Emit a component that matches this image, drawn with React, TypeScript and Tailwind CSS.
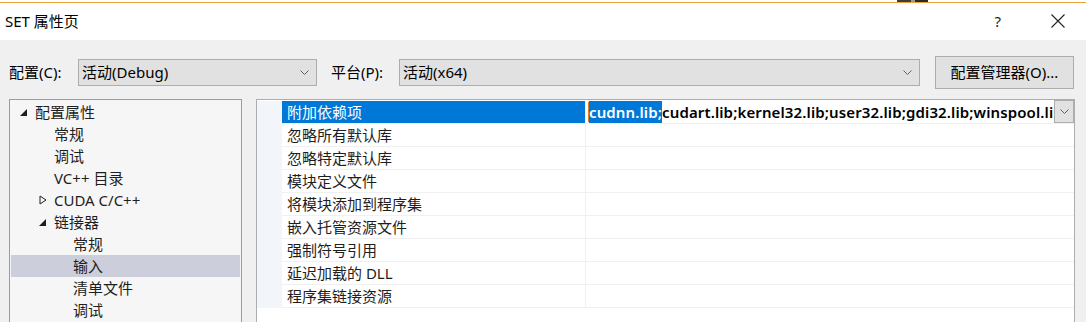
import React from "react";

const font = "font-['Noto_Sans','Noto_Sans_CJK_SC',sans-serif]";

function Chevron() {
  return (
    <svg width="9" height="5" viewBox="0 0 9 5" className="shrink-0">
      <polyline points="0.5,0.5 4.5,4.5 8.5,0.5" fill="none" stroke="#606060" strokeWidth="1" />
    </svg>
  );
}

function Combo({ text, width }: { text: string; width: string }) {
  return (
    <div className={`${width} h-[27px] flex items-center justify-between bg-[#e1e1e1] border border-[#adadad] pl-[3px] pr-[7px]`}>
      <span className="text-[15px] leading-none text-black">{text}</span>
      <Chevron />
    </div>
  );
}

function Expanded() {
  return (
    <svg width="9" height="9" viewBox="0 0 9 9" className="shrink-0">
      <polygon points="8,1 8,8 1,8" fill="#1e1e1e" />
    </svg>
  );
}

function Collapsed() {
  return (
    <svg width="8" height="10" viewBox="0 0 8 10" className="shrink-0">
      <polygon points="1,1 7,5 1,9" fill="none" stroke="#1e1e1e" strokeWidth="1" />
    </svg>
  );
}

const tree: { label: string; level: number; icon?: "open" | "closed"; selected?: boolean }[] = [
  { label: "配置属性", level: 0, icon: "open" },
  { label: "常规", level: 1 },
  { label: "调试", level: 1 },
  { label: "VC++ 目录", level: 1 },
  { label: "CUDA C/C++", level: 1, icon: "closed" },
  { label: "链接器", level: 1, icon: "open" },
  { label: "常规", level: 2 },
  { label: "输入", level: 2, selected: true },
  { label: "清单文件", level: 2 },
  { label: "调试", level: 2 },
];

const props = [
  "附加依赖项",
  "忽略所有默认库",
  "忽略特定默认库",
  "模块定义文件",
  "将模块添加到程序集",
  "嵌入托管资源文件",
  "强制符号引用",
  "延迟加载的 DLL",
  "程序集链接资源",
];

export default function App() {
  return (
    <div className={`w-[1086px] h-[322px] overflow-hidden bg-[#f0f0f0] ${font} text-black`}>
      {/* title bar */}
      <div className="bg-white">
        <div className="h-[2px] flex">
          <div className="w-[897px]" />
          <div className="w-[14px] bg-[#3c3c3c]" />
          <div className="w-[4px] bg-[#9a9a9a]" />
          <div className="w-[13px] bg-[#2a2a2a]" />
        </div>
        <div className="h-[1px] bg-[#eea236]" />
        <div className="h-[37px] flex items-center pl-[5px] pb-[1px]">
          <span className="text-[15px] leading-none">SET 属性页</span>
          <span className="ml-auto text-[15px] leading-none text-[#222]">?</span>
          <svg width="14" height="14" viewBox="0 0 14 14" className="ml-[50px] mr-[21px]">
            <path d="M0.5 0.5 L13.5 13.5 M13.5 0.5 L0.5 13.5" stroke="#222" strokeWidth="1.1" />
          </svg>
        </div>
      </div>

      {/* configuration row */}
      <div className="flex items-center pt-[16px] pl-[9px] h-[49px]">
        <span className="w-[69px] text-[15px] leading-none">配置(C):</span>
        <Combo text="活动(Debug)" width="w-[239px]" />
        <span className="ml-[14px] w-[68px] text-[15px] leading-none">平台(P):</span>
        <Combo text="活动(x64)" width="w-[521px]" />
        <div className="ml-[15px] w-[139px] h-[33px] flex items-center justify-center bg-[#e1e1e1] border border-[#adadad] text-[15px]">
          配置管理器(O)...
        </div>
      </div>

      {/* panels */}
      <div className="flex pt-[10px] pl-[9px] gap-[14px]">
        <div className="w-[233px] h-[230px] shrink-0 bg-[#f6f6f6] border border-[#9c9c9c] p-[1px]">
          {tree.map((t, i) => (
            <div
              key={i}
              className={`h-[22px] flex items-center ${t.selected ? "bg-[#cccedb]" : ""}`}
            >
              <div
                className={`flex items-center justify-end pr-[7px] ${
                  t.level === 0 ? "w-[24px]" : t.level === 1 ? "w-[43px]" : "w-[62px]"
                }`}
              >
                {t.icon === "open" && <Expanded />}
                {t.icon === "closed" && <Collapsed />}
              </div>
              <span className="text-[15px] leading-none text-[#1e1e1e] whitespace-nowrap">{t.label}</span>
            </div>
          ))}
        </div>

        <div className="w-[819px] h-[230px] shrink-0 bg-white border border-[#abadb3] pt-[1px]">
          <div className="flex">
            <div className="w-[25px] shrink-0 bg-[#f2f5fa]" />
            <div className="flex-1 min-w-0">
              {props.map((p, i) => (
                <div key={i} className="h-[23px] flex border-b border-[#f0f0f0]">
                  <div
                    className={`w-[304px] shrink-0 flex items-center pl-[5px] border-r border-[#f0f0f0] ${
                      i === 0 ? "bg-[#0078d7] text-white" : "text-[#1e1e1e]"
                    }`}
                  >
                    <span className="text-[15px] leading-none whitespace-nowrap">{p}</span>
                  </div>
                  {i === 0 ? (
                    <div className="flex-1 flex items-stretch min-w-0">
                      <div className="flex-1 flex items-center pl-[2px] overflow-hidden min-w-0">
                        <div className="w-[1px] h-[20px] bg-[#e07a1f] shrink-0" />
                        <span className="text-[15px] font-semibold leading-none whitespace-nowrap tracking-[0.12px]">
                          <span className="bg-[#0078d7] text-white py-[3px]">cudnn.lib;</span>
                          cudart.lib;kernel32.lib;user32.lib;gdi32.lib;winspool.li
                        </span>
                      </div>
                      <div className="w-[20px] -mt-[1px] h-[23px] flex items-center justify-center bg-[#e1e1e1] border border-[#adadad] shrink-0">
                        <Chevron />
                      </div>
                    </div>
                  ) : (
                    <div className="flex-1" />
                  )}
                </div>
              ))}
            </div>
          </div>
        </div>
      </div>
    </div>
  );
}
